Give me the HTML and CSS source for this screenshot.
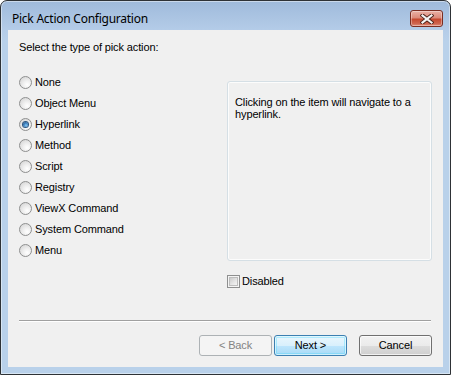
FILE: index.html
```html
<!DOCTYPE html>
<html>
<head>
<meta charset="utf-8">
<link rel="stylesheet" href="styles.css">
</head>
<body>
<div class="window">
  <div class="titlebar">
    <span class="title">Pick Action Configuration</span>
    <span class="close">
      <svg width="14" height="10" viewBox="0 0 14 10">
        <path d="M2.5 1.5 L11.5 8.5 M11.5 1.5 L2.5 8.5" stroke="#4a2018" stroke-width="4" stroke-linecap="square" fill="none"/>
        <path d="M2.5 1.5 L11.5 8.5 M11.5 1.5 L2.5 8.5" stroke="#f4f4f4" stroke-width="2.2" stroke-linecap="square" fill="none"/>
      </svg>
    </span>
  </div>
  <div class="client">
    <div class="heading">Select the type of pick action:</div>
    <div class="body">
      <div class="options">
        <div class="opt"><span class="radio"></span>None</div>
        <div class="opt"><span class="radio"></span>Object Menu</div>
        <div class="opt"><span class="radio checked"></span>Hyperlink</div>
        <div class="opt"><span class="radio"></span>Method</div>
        <div class="opt"><span class="radio"></span>Script</div>
        <div class="opt"><span class="radio"></span>Registry</div>
        <div class="opt"><span class="radio"></span>ViewX Command</div>
        <div class="opt"><span class="radio"></span>System Command</div>
        <div class="opt"><span class="radio"></span>Menu</div>
      </div>
      <div class="right">
        <div class="desc">Clicking on the item will navigate to a<br>hyperlink.</div>
        <div class="check"><span class="box"></span>Disabled</div>
      </div>
    </div>
    <div class="footer">
      <div class="sep"></div>
      <div class="buttons">
        <span class="btn disabled">&lt; Back</span>
        <span class="btn default">Next &gt;</span>
        <span class="btn cancel">Cancel</span>
      </div>
    </div>
  </div>
</div>
</body>
</html>
```

FILE: styles.css
```css
html, body {
  margin: 0;
  padding: 0;
  background: #ffffff;
}
.window {
  width: 451px;
  height: 375px;
  box-sizing: border-box;
  border: 1px solid #2e3236;
  border-radius: 7px 7px 0 0;
  background: linear-gradient(to bottom, #9fbadb 0px, #b4cce8 29px, #b9d1ea 40px, #b9d1ea 100%);
  padding: 0 7px 7px 7px;
  display: flex;
  flex-direction: column;
  box-shadow: inset 0 0 0 1px rgba(255,255,255,0.45);
}
.titlebar {
  height: 29px;
  display: flex;
  align-items: flex-start;
  justify-content: space-between;
  padding-left: 4px;
}
.title {
  font-family: "Noto Sans", sans-serif;
  font-size: 12px;
  letter-spacing: -0.25px;
  color: #000;
  margin-top: 10px;
  line-height: 16px;
}
.close {
  width: 33px;
  height: 17px;
  box-sizing: border-box;
  margin-top: 9px;
  border: 1px solid #7a2d22;
  border-radius: 3px;
  background: linear-gradient(to bottom, #eab1a6 0%, #dc8a7a 45%, #c5482f 55%, #cf6650 85%, #e09280 100%);
  box-shadow: inset 0 0 0 1px rgba(255,255,255,0.35);
  display: flex;
  align-items: center;
  justify-content: center;
}
.close svg { display: block; }
.client {
  flex: 1;
  background: #f0f0f0;
  padding: 11px 11px 11px 11px;
  display: flex;
  flex-direction: column;
  font-family: "Liberation Sans", Arial, sans-serif;
  font-size: 11px;
  letter-spacing: -0.12px;
  color: #000;
}
.heading {
  line-height: 13px;
  height: 13px;
}
.body {
  display: flex;
  margin-top: 18px;
}
.options {
  width: 208px;
  display: flex;
  flex-direction: column;
}
.opt {
  height: 21px;
  display: flex;
  align-items: center;
  line-height: 13px;
}
.radio {
  width: 13px;
  height: 13px;
  box-sizing: border-box;
  border-radius: 50%;
  border: 1px solid #8e8f8f;
  background: radial-gradient(circle at 65% 70%, #ffffff 0%, #f0f0f0 35%, #cfcfcf 100%);
  margin-right: 3px;
  display: flex;
  align-items: center;
  justify-content: center;
}
.radio.checked::after {
  content: "";
  width: 5px;
  height: 5px;
  border-radius: 50%;
  background: radial-gradient(circle at 60% 65%, #8fd0f6 0%, #3a7fc0 45%, #163b66 100%);
  box-shadow: 0 0 0 1px #2c5680;
}
.right {
  width: 205px;
  display: flex;
  flex-direction: column;
}
.desc {
  margin-top: 9px;
  height: 180px;
  box-sizing: border-box;
  border: 1px solid #d5dfe5;
  border-radius: 3px;
  padding: 14px 7px 0 7px;
  line-height: 12px;
  box-shadow: inset 0 0 0 1px rgba(255,255,255,0.8);
}
.check {
  margin-top: 14px;
  height: 13px;
  display: flex;
  align-items: center;
  line-height: 13px;
}
.box {
  width: 13px;
  height: 13px;
  box-sizing: border-box;
  border: 1px solid #8e8f8f;
  background: #f4f4f4;
  margin-right: 2px;
  position: relative;
}
.box::after {
  content: "";
  position: absolute;
  left: 1px;
  top: 1px;
  right: 1px;
  bottom: 1px;
  border: 1px solid #bdbdbd;
  background: linear-gradient(135deg, #cbcbcb 0%, #e6e6e6 60%, #f4f4f4 100%);
}
.footer {
  margin-top: auto;
}
.sep {
  height: 1px;
  background: #a0a0a0;
  border-bottom: 1px solid #ffffff;
  margin-right: 1px;
}
.buttons {
  margin-top: 13px;
  display: flex;
  justify-content: flex-end;
}
.btn {
  width: 73px;
  height: 21px;
  box-sizing: border-box;
  border: 1px solid #707070;
  border-radius: 3px;
  display: flex;
  align-items: center;
  justify-content: center;
  background: linear-gradient(to bottom, #f2f2f2 0%, #ebebeb 50%, #dddddd 51%, #cfcfcf 100%);
  box-shadow: inset 0 0 0 1px rgba(255,255,255,0.7);
  line-height: 13px;
}
.btn.disabled {
  border-color: #adb2b5;
  background: #f4f4f4;
  color: #838383;
  box-shadow: none;
}
.btn.default {
  margin-left: 2px;
  border-color: #3c7fb1;
  background: linear-gradient(to bottom, #eaf6fd 0%, #d9f0fc 50%, #bee6fd 51%, #a7d9f5 100%);
  box-shadow: inset 0 0 0 1px rgba(255,255,255,0.6), inset 0 0 0 2px rgba(72,216,251,0.35);
}
.btn.cancel {
  margin-left: 12px;
}
```
